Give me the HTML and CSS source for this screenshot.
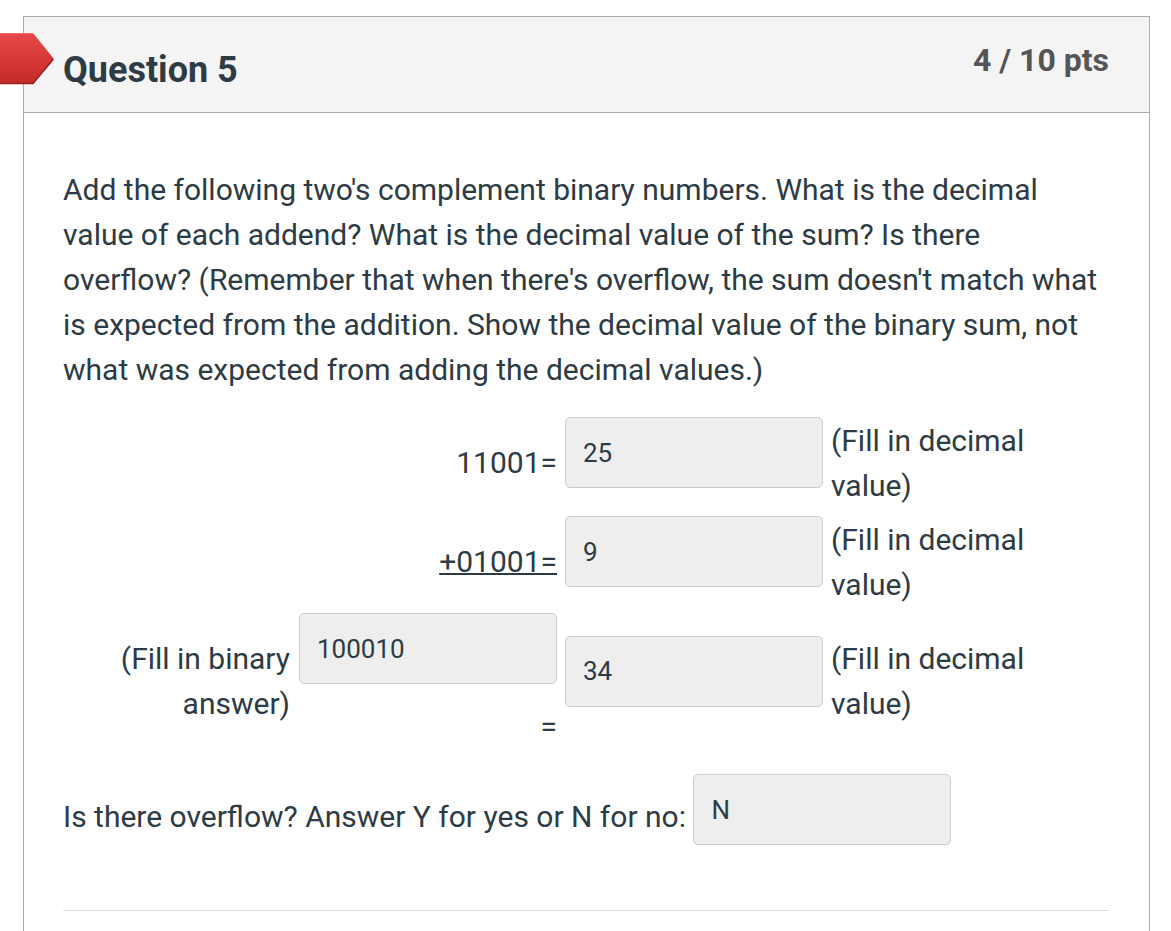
FILE: index.html
```html
<!DOCTYPE html>
<html lang="en">

<head>
    <meta charset="UTF-8">
    <meta name="viewport" content="width=device-width, initial-scale=1.0">
    <title>Question 5</title>
    <link rel="stylesheet" href="styles.css">
</head>

<body>
    <div class="question">
        <svg class="flag" width="54" height="52" viewBox="0 0 54 52" aria-hidden="true">
            <defs>
                <linearGradient id="flag-fill" x1="0" y1="0" x2="0" y2="1">
                    <stop offset="0" stop-color="#e84848" />
                    <stop offset="1" stop-color="#c42a2a" />
                </linearGradient>
            </defs>
            <polygon points="0,0 33,0 54,26 33,51 0,51" fill="url(#flag-fill)" />
            <polyline points="0,50.5 33,50.5 53,26.5" fill="none" stroke="#9e1f1f" stroke-width="1.5" />
            <polyline points="0,0.5 33,0.5" fill="none" stroke="#ef6a6a" stroke-width="1" />
        </svg>

        <div class="question-header">
            <h2 class="question-title">Question 5</h2>
            <span class="question-points">4 / 10 pts</span>
        </div>

        <div class="question-body">
            <p>Add the following two's complement binary numbers. What is the decimal value of each addend? What is the decimal value of the sum? Is there overflow? (Remember that when there's overflow, the sum doesn't match what is expected from the addition. Show the decimal value of the binary sum, not what was expected from adding the decimal values.)</p>

            <table class="sum-table">
                <colgroup>
                    <col class="col-label">
                    <col class="col-binary">
                    <col class="col-decimal">
                    <col class="col-hint">
                </colgroup>
                <tr>
                    <td></td>
                    <td class="right">11001=</td>
                    <td><input class="answer" type="text" value="25" readonly></td>
                    <td>(Fill in decimal value)</td>
                </tr>
                <tr>
                    <td></td>
                    <td class="right"><u>+01001=</u></td>
                    <td><input class="answer" type="text" value="9" readonly></td>
                    <td>(Fill in decimal value)</td>
                </tr>
                <tr>
                    <td class="right">(Fill in binary answer)</td>
                    <td class="right"><input class="answer" type="text" value="100010" readonly>=</td>
                    <td><input class="answer" type="text" value="34" readonly></td>
                    <td>(Fill in decimal value)</td>
                </tr>
            </table>

            <p>Is there overflow? Answer Y for yes or N for no: <input class="answer inline" type="text" value="N" readonly></p>

            <hr class="divider">
        </div>
    </div>
</body>

</html>
```

FILE: styles.css
```css
* {
    box-sizing: border-box;
}

body {
    margin: 0;
    padding: 16px 21px 0 23px;
    font-family: Roboto, "Liberation Sans", sans-serif;
    color: #2d3b45;
    background: #fff;
    overflow: hidden;
}

.question {
    position: relative;
    border: 1px solid #acacac;
    border-bottom: none;
    padding-bottom: 20px;
}

.flag {
    position: absolute;
    top: 16px;
    left: -24px;
    display: block;
}

.question-header {
    height: 96px;
    background: #f4f4f4;
    border-bottom: 1px solid #acacac;
    padding: 27px 40px 0 39px;
    display: flex;
    justify-content: space-between;
    align-items: flex-start;
}

.question-title {
    margin: 8px 0 0;
    font-size: 36px;
    line-height: 1;
    font-weight: 700;
    color: #2d3b45;
}

.question-points {
    font-size: 32px;
    line-height: 1;
    font-weight: 700;
    color: #555;
}

.question-body {
    padding: 33px 40px 0 39px;
    font-size: 30px;
    line-height: 45px;
}

.question-body p {
    margin: 21px 0;
}

.sum-table {
    border-collapse: collapse;
    table-layout: fixed;
    width: 1004px;
}

.col-label {
    width: 231px;
}

.col-binary {
    width: 267px;
}

.col-decimal {
    width: 266px;
}

.col-hint {
    width: 240px;
}

.sum-table td {
    padding: 4px;
    vertical-align: middle;
}

.sum-table tr:last-child td {
    padding-top: 2px;
}

.sum-table .right {
    text-align: right;
}

.sum-table u {
    text-decoration-thickness: 2px;
}

.answer {
    display: block;
    width: 258px;
    height: 71px;
    margin: 0 0 20px;
    padding: 0 17px;
    font-family: Roboto, "Liberation Sans", sans-serif;
    font-size: 26px;
    color: #2d3b45;
    background: #eee;
    border: 1px solid #ccc;
    border-radius: 5px;
    outline: none;
}

.sum-table .right .answer {
    margin-left: auto;
}

.answer.inline {
    display: inline-block;
    vertical-align: middle;
}

.divider {
    margin: 45px 0 0;
    border: none;
    border-top: 1px solid #ddd;
}
```
